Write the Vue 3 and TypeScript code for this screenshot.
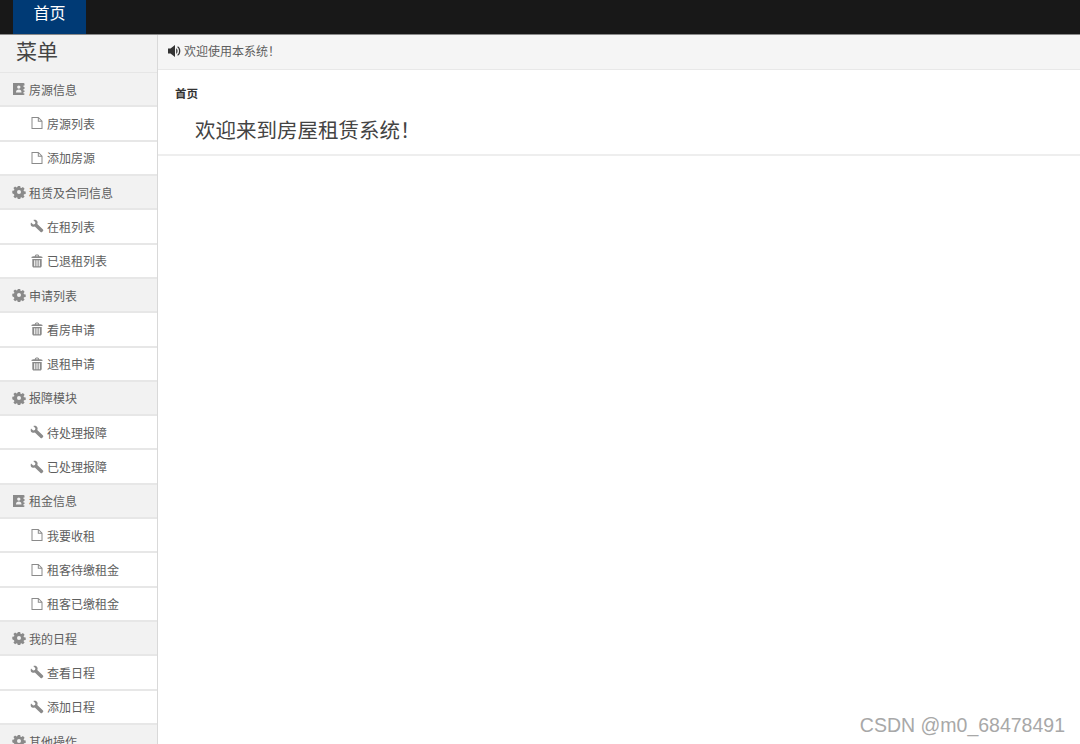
<template>
  <div class="page">
    <!-- 顶部导航 -->
    <div class="topbar">
      <a class="nav-tab">首页</a>
    </div>

    <div class="main">
      <!-- 左侧菜单 -->
      <div class="sidebar">
        <div class="sidebar-title">菜单</div>
        <template v-for="group in menu" :key="group.title">
          <div class="menu-group">
            <svg class="icon" viewBox="0 0 14 14"><path :d="icons[group.icon]" fill-rule="evenodd" /></svg>
            <span>{{ group.title }}</span>
          </div>
          <div v-for="item in group.items" :key="item.label" class="menu-item">
            <svg class="icon" viewBox="0 0 14 14"><path :d="icons[item.icon]" fill-rule="evenodd" /></svg>
            <span>{{ item.label }}</span>
          </div>
        </template>
      </div>

      <!-- 内容区 -->
      <div class="content">
        <div class="notice">
          <svg class="icon notice-icon" viewBox="0 0 14 14"><path :d="icons.sound" fill-rule="evenodd" /></svg>
          <span>欢迎使用本系统！</span>
        </div>
        <div class="panel">
          <div class="crumb">首页</div>
          <h2 class="welcome">欢迎来到房屋租赁系统！</h2>
        </div>
      </div>
    </div>

    <div class="watermark">CSDN @m0_68478491</div>
  </div>
</template>

<script setup lang="ts">
type IconName = 'book' | 'cog' | 'file' | 'wrench' | 'trash' | 'sound'

interface MenuItem {
  label: string
  icon: IconName
}

interface MenuGroup {
  title: string
  icon: IconName
  items: MenuItem[]
}

const icons: Record<IconName, string> = {
  book: 'M1 1h10.500a1 1 0 0 1 1 1v1.500H11.500v1.500h1V7H11.500v1.500h1V10H11.500v1.500h1V12a1 1 0 0 1-1 1H1zM6.800 3.400a1.700 1.700 0 1 0 0 3.400 1.700 1.700 0 0 0 0-3.400zM4 10.500h5.500c0-2.300-1-3-2.700-3S4 8.200 4 10.500z',
  cog: 'M5.800 1h2.400l.3 1.700 1 .4 1.400-1 1.700 1.700-1 1.400.4 1 1.700.3v2.400l-1.700.3-.4 1 1 1.400-1.700 1.700-1.400-1-1 .4-.3 1.700H5.800l-.3-1.700-1-.4-1.400 1-1.700-1.700 1-1.400-.4-1L.3 8.200V5.800L2 5.500l.4-1-1-1.400 1.700-1.700 1.400 1 1-.4zM7 5a2 2 0 1 0 0 4 2 2 0 0 0 0-4z',
  file: 'M1.500 1h7L12.500 5v8h-11zM2.500 2v10h9V5.800H7.800V2zM8.800 2.400v2.400h2.100z',
  wrench: 'M1 3.400 3.200 5.400 5 5 5.400 3.200 3.300 1.100C5 .4 6.800 1 7.400 2.400c.4.900.3 1.800-.1 2.600L13 10.600a1.100 1.100 0 0 1 0 1.500l-.9.900a1.100 1.100 0 0 1-1.500 0L4.800 7.500c-.9.400-1.900.4-2.700 0C.7 6.800.3 5 1 3.400z',
  trash: 'M4.800 2.200C4.800 1 5.800.5 7 .5s2.200.5 2.200 1.700c1.500 0 3.300.2 3.300 1.100v.7h-11v-.7c0-.9 1.800-1.100 3.300-1.100zM5.800 2.200h2.400c0-.5-.5-.7-1.200-.7s-1.200.2-1.200.7zM2.300 5h9.400v7c0 .8-.7 1.500-1.500 1.500H3.800c-.8 0-1.500-.7-1.500-1.500zM4.200 6.200v6h1.100v-6zM6.450 6.200v6h1.100v-6zM8.700 6.200v6h1.100v-6z',
  sound: 'M0 4.500h2.500L7 1v12L2.500 9.500H0zM8.200 4.200c1.800.8 1.800 4.800 0 5.600zM9.800 2.200c3.400 1.400 3.400 8.200 0 9.600l-.5-1c2.300-1.300 2.300-6.300 0-7.600z',
}

const menu: MenuGroup[] = [
  {
    title: '房源信息',
    icon: 'book',
    items: [
      { label: '房源列表', icon: 'file' },
      { label: '添加房源', icon: 'file' },
    ],
  },
  {
    title: '租赁及合同信息',
    icon: 'cog',
    items: [
      { label: '在租列表', icon: 'wrench' },
      { label: '已退租列表', icon: 'trash' },
    ],
  },
  {
    title: '申请列表',
    icon: 'cog',
    items: [
      { label: '看房申请', icon: 'trash' },
      { label: '退租申请', icon: 'trash' },
    ],
  },
  {
    title: '报障模块',
    icon: 'cog',
    items: [
      { label: '待处理报障', icon: 'wrench' },
      { label: '已处理报障', icon: 'wrench' },
    ],
  },
  {
    title: '租金信息',
    icon: 'book',
    items: [
      { label: '我要收租', icon: 'file' },
      { label: '租客待缴租金', icon: 'file' },
      { label: '租客已缴租金', icon: 'file' },
    ],
  },
  {
    title: '我的日程',
    icon: 'cog',
    items: [
      { label: '查看日程', icon: 'wrench' },
      { label: '添加日程', icon: 'wrench' },
    ],
  },
  { title: '其他操作', icon: 'cog', items: [] },
]
</script>

<style scoped>
.page {
  position: relative;
  width: 1080px;
  height: 744px;
  overflow: hidden;
  background: #fff;
  color: #333;
  font-family: "Liberation Sans", "Noto Sans CJK SC", sans-serif;
}

.topbar {
  height: 34px;
  padding-left: 13px;
  background: #181818;
  border-bottom: 1px solid #8a8a8a;
}

.nav-tab {
  display: block;
  width: 73px;
  height: 34px;
  line-height: 27px;
  text-align: center;
  font-size: 16px;
  color: #fff;
  background: #003a75;
}

.main {
  display: flex;
  height: 709px;
}

.sidebar {
  width: 157px;
  flex-shrink: 0;
  border-right: 1px solid #d9d9d9;
  background: #fff;
}

.sidebar-title {
  height: 38px;
  padding-left: 16px;
  line-height: 33px;
  font-size: 21px;
  color: #444;
  background: #f2f2f2;
  border-bottom: 1px solid #e6e6e6;
  box-sizing: border-box;
}

.menu-group,
.menu-item {
  display: flex;
  align-items: center;
  height: 34.32px;
  box-sizing: border-box;
  border-bottom: 2px solid #e7e7e7;
  font-size: 12px;
  color: #5e5e5e;
}

.menu-group {
  padding-left: 12px;
  background: #f2f2f2;
}

.menu-item {
  padding-left: 30px;
  background: #fff;
}

.icon {
  width: 14px;
  height: 14px;
  margin-right: 3px;
  fill: #8a8a8a;
  flex-shrink: 0;
}

.content {
  flex: 1;
  min-width: 0;
}

.notice {
  display: flex;
  align-items: center;
  height: 35px;
  padding-left: 10px;
  padding-bottom: 3px;
  box-sizing: border-box;
  font-size: 12px;
  color: #5e5e5e;
  background: #f5f5f5;
  border-bottom: 1px solid #e8e8e8;
}

.notice-icon {
  fill: #333;
  margin-right: 2px;
}

.panel {
  height: 86px;
  padding-top: 16px;
  box-sizing: border-box;
  border-bottom: 2px solid #eee;
}

.crumb {
  padding-left: 17px;
  font-size: 11.5px;
  font-weight: bold;
  line-height: 16px;
  color: #333;
}

.welcome {
  margin: 14px 0 0;
  padding-left: 37px;
  font-size: 20.5px;
  font-weight: normal;
  line-height: 30px;
  color: #444;
}

.watermark {
  position: absolute;
  right: 15px;
  bottom: 9px;
  font-size: 19.5px;
  line-height: 20px;
  color: #a8a8a8;
}
</style>
